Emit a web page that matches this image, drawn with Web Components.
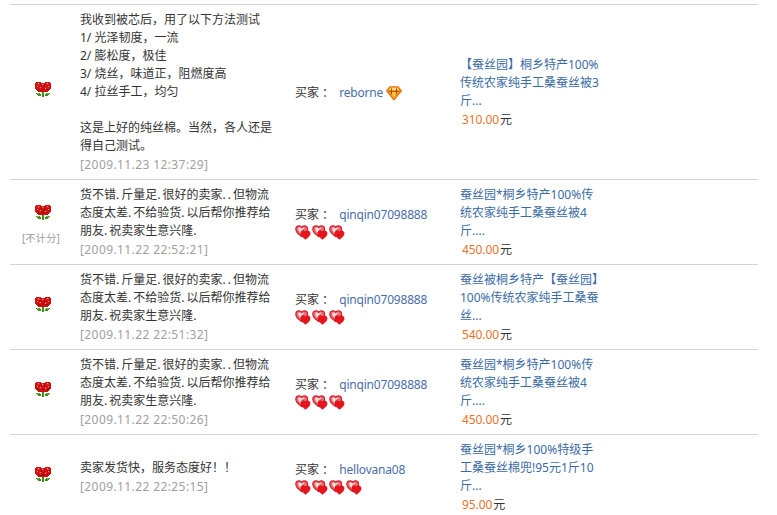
<!DOCTYPE html>
<html lang="zh-CN">
<head>
<meta charset="utf-8">
<title>rate list</title>
<style>
    html, body { margin: 0; padding: 0; height: 515px; overflow: hidden; background: #fff; }
    body { font: 12px/18px "Noto Sans", "Noto Sans CJK SC", sans-serif; color: #333; }
    /* los puntos del comentario van mas separados */
    i { font-style: normal; letter-spacing: 2px; }
</style>
</head>
<body>
<rate-list>
    <rate-row date="2009.11.23 12:37:29" buyer="reborne" rank="diamond" count="1" price="310.00">
        <span slot="comment">我收到被芯后，用了以下方法测试<br>1/ 光泽韧度，一流<br>2/ 膨松度，极佳<br>3/ 烧丝，味道正，阻燃度高<br>4/ 拉丝手工，均匀<br><br>这是上好的纯丝棉。当然，各人还是得自己测试。</span>
        <span slot="item">【蚕丝园】桐乡特产100%传统农家纯手工桑蚕丝被3斤...</span>
    </rate-row>
    <rate-row date="2009.11.22 22:52:21" buyer="qinqin07098888" rank="heart" count="3" price="450.00" note="[不计分]">
        <span slot="comment">货不错<i>.</i>斤量足<i>.</i>很好的卖家<i>..</i>但物流<br>态度太差<i>.</i>不给验货<i>.</i>以后帮你推荐给<br>朋友<i>.</i>祝卖家生意兴隆<i>.</i></span>
        <span slot="item">蚕丝园*桐乡特产100%传统农家纯手工桑蚕丝被4斤....</span>
    </rate-row>
    <rate-row date="2009.11.22 22:51:32" buyer="qinqin07098888" rank="heart" count="3" price="540.00">
        <span slot="comment">货不错<i>.</i>斤量足<i>.</i>很好的卖家<i>..</i>但物流<br>态度太差<i>.</i>不给验货<i>.</i>以后帮你推荐给<br>朋友<i>.</i>祝卖家生意兴隆<i>.</i></span>
        <span slot="item">蚕丝被桐乡特产【蚕丝园】100%传统农家纯手工桑蚕丝...</span>
    </rate-row>
    <rate-row date="2009.11.22 22:50:26" buyer="qinqin07098888" rank="heart" count="3" price="450.00">
        <span slot="comment">货不错<i>.</i>斤量足<i>.</i>很好的卖家<i>..</i>但物流<br>态度太差<i>.</i>不给验货<i>.</i>以后帮你推荐给<br>朋友<i>.</i>祝卖家生意兴隆<i>.</i></span>
        <span slot="item">蚕丝园*桐乡特产100%传统农家纯手工桑蚕丝被4斤....</span>
    </rate-row>
    <rate-row date="2009.11.22 22:25:15" buyer="hellovana08" rank="heart" count="4" price="95.00">
        <span slot="comment">卖家发货快，服务态度好！！</span>
        <span slot="item">蚕丝园*桐乡100%特级手工桑蚕丝棉兜!95元1斤10斤...</span>
    </rate-row>
</rate-list>

<script>
//La flor de la valoracion
class rateFlower extends HTMLElement{
    constructor(){
        super();
        this.attachShadow({mode: "open"});
    }
    connectedCallback(){
        this.shadowRoot.innerHTML = `
            <style>
                :host{ display: block; width: 16px; height: 17px; }
                svg{ display: block; }
            </style>
            <svg width="16" height="17" viewBox="0 0 16 17" shape-rendering="crispEdges">
                <path fill="#cf1010" d="M1 1h5v1h4v-1h5v1h1v6h-1v1h-1v1h-1v1h-10v-1h-1v-1h-1v-1h-1v-6h1z"/>
                <path fill="#ec2020" d="M2 2h3v2h-3zM7 2h2v3h-2zM11 2h3v2h-3zM4 6h2v2h-2zM10 6h2v2h-2z"/>
                <path fill="#f59a9a" d="M3 2h1v1h-1zM7 3h1v1h-1zM12 2h1v1h-1zM5 6h1v1h-1zM10 7h1v1h-1zM2 5h1v1h-1zM13 5h1v1h-1z"/>
                <path fill="#9a0a0a" d="M6 4h1v2h-1zM9 4h1v2h-1zM3 8h2v1h-2zM7 8h2v1h-2zM11 8h2v1h-2z"/>
                <path fill="#3f8f1f" d="M7 11h2v5h-2zM1 12h4v1h1v2h-3v-1h-1v-1h-1zM11 12h4v1h-1v1h-1v1h-3v-2h1z"/>
                <path fill="#86c04c" d="M2 12h2v1h-2zM12 12h2v1h-2z"/>
            </svg>
        `;
    }
}

//Los iconos de rango del comprador
class rankIcon extends HTMLElement{
    constructor(){
        super();
        this.attachShadow({mode: "open"});
    }
    static get observedAttributes(){
        return ['type'];
    }
    attributeChangedCallback(attr, oldVal, newVal){
        if(oldVal !== newVal){
            this[attr] = newVal;
            this.render();
        }
    }
    getIcon(){
        if(this.type === 'diamond'){
            return `
                <svg width="16" height="16" viewBox="0 0 16 16">
                    <path fill="#f7a01e" stroke="#dd7410" stroke-width="1.2" stroke-linejoin="round" d="M3.800 1.800h8.400l3.200 4L8 14.800.6 5.800z"/>
                    <path fill="#ffe070" d="M4.500 2.800h7l1.800 2.600H2.700z"/>
                    <path fill="#f9c83c" d="M4.500 7h7L8 12z"/>
                    <path fill="none" stroke="#c23c0c" stroke-width="1.100" d="M2.500 6.300h11M5.500 3.500v6M10.500 3.500v6"/>
                </svg>
            `;
        }
        return `
            <svg width="17" height="16" viewBox="0 0 17 16">
                <path fill="#ee6a72" stroke="#d3202a" stroke-width="1.200" d="M6.500 12.500C3 10 .8 8 .8 5.300.8 3.200 2.400 1.800 4.200 1.800c1 0 1.900.5 2.500 1.400.6-.9 1.500-1.400 2.500-1.400 1.900 0 3.400 1.400 3.400 3.500 0 2.700-2.600 4.900-6.100 7.200z"/>
                <path fill="#fde4e4" d="M3.500 3.800c1-.6 2.200-.2 3 .9.700-.9 2-1.200 3-.6-.8 1-2.400 1.300-3.200 2.500-.3.900-.5 1.700-.8 2.400-1-.8-2.700-3.200-2-5.200z"/>
                <path fill="#e8141c" stroke="#c50d14" stroke-width=".6" d="M10.500 15.300C7.600 13.300 5.900 11.800 5.900 9.500 5.900 7.900 7.100 6.800 8.400 6.800c.9 0 1.600.4 2.100 1.200.5-.8 1.200-1.200 2.100-1.200 1.400 0 2.500 1.100 2.500 2.700 0 2.300-1.700 3.800-4.600 5.800z"/>
            </svg>
        `;
    }
    render(){
        this.shadowRoot.innerHTML = `
            <style>
                :host{ display: block; height: 16px; }
                svg{ display: block; }
            </style>
            ${this.getIcon()}
        `;
    }
    connectedCallback(){
        this.render();
    }
}

//Una fila del listado
class rateRow extends HTMLElement{
    constructor(){
        super();
        this.attachShadow({mode: "open"});
    }
    getIcons(){
        const type = this.getAttribute('rank');
        const count = Number(this.getAttribute('count'));
        let html = '';
        for(let i = 0; i < count; i++){
            html += `<rank-icon type="${type}"></rank-icon>`;
        }
        return html;
    }
    getStyle(){
        return `
            <style>
                :host{
                    display: grid;
                    grid-template-columns: 64px 220px 166px 140px;
                    align-items: center;
                    border-top: 1px solid #d4d4d4;
                    padding: 6px 0 5px;
                }
                .mark{
                    display: flex;
                    flex-direction: column;
                    align-items: center;
                    margin-left: 1px;
                    padding-bottom: 6px;
                }
                .note{
                    margin: 10px 3px -10px 0;
                    font-size: 10px;
                    line-height: 14px;
                    letter-spacing: .3px;
                    color: #999;
                }
                .comment{
                    padding: 0 20px 0 6px;
                }
                .date{
                    display: block;
                    margin-top: 1px;
                    color: #a0a0a0;
                    letter-spacing: .4px;
                }
                .buyer{
                    padding-left: 1px;
                }
                .buyer a{
                    margin-left: 2px;
                    color: #4a6ea8;
                    letter-spacing: -.2px;
                }
                .who{
                    display: flex;
                    align-items: center;
                    gap: 3px;
                }
                .ranks{
                    display: flex;
                }
                .item{
                    color: #3b6ba5;
                }
                .price{
                    display: block;
                    margin-top: 1px;
                    padding-left: 2px;
                    color: #333;
                }
                .price b{
                    font-weight: normal;
                    margin-right: 1px;
                    color: #e8732c;
                    letter-spacing: -.1px;
                }
            </style>
        `;
    }
    render(){
        const rank = this.getAttribute('rank');
        const note = this.getAttribute('note');
        this.shadowRoot.innerHTML = `
            ${this.getStyle()}
            <div class="mark">
                <rate-flower></rate-flower>
                ${note ? `<span class="note">${note}</span>` : ''}
            </div>
            <div class="comment">
                <slot name="comment"></slot>
                <span class="date">[${this.getAttribute('date')}]</span>
            </div>
            <div class="buyer">
                <div class="who">
                    <span>买家 ： <a>${this.getAttribute('buyer')}</a></span>
                    ${rank === 'diamond' ? this.getIcons() : ''}
                </div>
                ${rank === 'heart' ? `<div class="ranks">${this.getIcons()}</div>` : ''}
            </div>
            <div class="item">
                <slot name="item"></slot>
                <span class="price"><b>${this.getAttribute('price')}</b>元</span>
            </div>
        `;
    }
    connectedCallback(){
        this.render();
    }
}

//El contenedor con sus margenes
class rateList extends HTMLElement{
    constructor(){
        super();
        this.attachShadow({mode: "open"});
    }
    connectedCallback(){
        this.shadowRoot.innerHTML = `
            <style>
                :host{
                    display: block;
                    width: 748px;
                    padding: 4px 0 0 10px;
                }
            </style>
            <slot></slot>
        `;
    }
}

customElements.define("rate-flower", rateFlower);
customElements.define("rank-icon", rankIcon);
customElements.define("rate-row", rateRow);
customElements.define("rate-list", rateList);
</script>
</body>
</html>
